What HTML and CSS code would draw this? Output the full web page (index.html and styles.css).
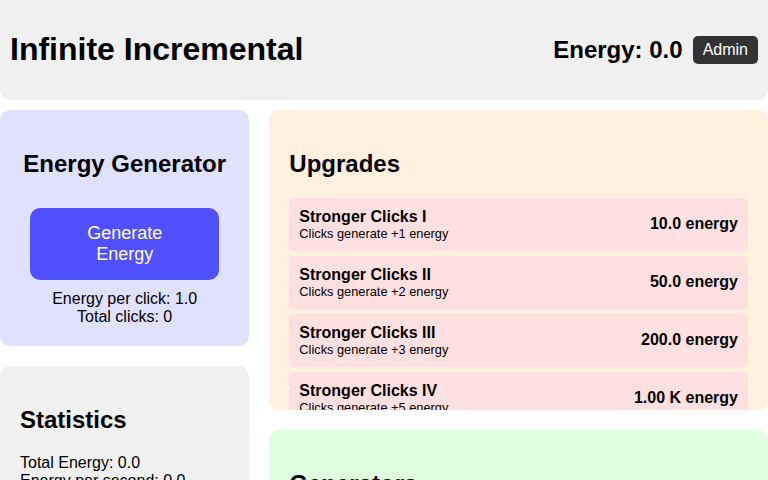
FILE: index.html
```html
<!DOCTYPE html>
<html>
<head>
<meta charset="utf-8">
<link rel="stylesheet" href="styles.css">
</head>
<body>
<header class="header">
  <h1 class="title">Infinite Incremental</h1>
  <div class="header-right">
    <h2 class="energy">Energy: 0.0</h2>
    <button class="admin">Admin</button>
  </div>
</header>
<main class="grid">
  <div class="left">
    <section class="card card-gen">
      <h2>Energy Generator</h2>
      <button class="gen-btn">Generate Energy</button>
      <div>Energy per click: 1.0</div>
      <div>Total clicks: 0</div>
    </section>
    <section class="card card-stats">
      <h2>Statistics</h2>
      <div>Total Energy: 0.0</div>
      <div>Energy per second: 0.0</div>
      <div>Total clicks: 0</div>
    </section>
  </div>
  <div class="right">
    <section class="card card-upgrades">
      <h2>Upgrades</h2>
      <div class="item">
        <div class="info"><div class="name">Stronger Clicks I</div><div class="desc">Clicks generate +1 energy</div></div>
        <div class="price">10.0 energy</div>
      </div>
      <div class="item">
        <div class="info"><div class="name">Stronger Clicks II</div><div class="desc">Clicks generate +2 energy</div></div>
        <div class="price">50.0 energy</div>
      </div>
      <div class="item">
        <div class="info"><div class="name">Stronger Clicks III</div><div class="desc">Clicks generate +3 energy</div></div>
        <div class="price">200.0 energy</div>
      </div>
      <div class="item">
        <div class="info"><div class="name">Stronger Clicks IV</div><div class="desc">Clicks generate +5 energy</div></div>
        <div class="price">1.00 K energy</div>
      </div>
      <div class="item">
        <div class="info"><div class="name">Stronger Clicks V</div><div class="desc">Clicks generate +10 energy</div></div>
        <div class="price">5.00 K energy</div>
      </div>
    </section>
    <section class="card card-generators">
      <h2>Generators</h2>
    </section>
  </div>
</main>
</body>
</html>
```
FILE: styles.css
```css
* { box-sizing: border-box; }
body {
  margin: 0;
  font-family: "Liberation Sans", Arial, sans-serif;
  font-size: 16px;
  color: #000;
  background: #fff;
}
.header {
  display: flex;
  justify-content: space-between;
  align-items: center;
  padding: 10px;
  background: #f0f0f0;
  border-radius: 0 0 10px 10px;
  margin-bottom: 10px;
}
.title {
  font-size: 32px;
  margin: 21.44px 0;
}
.header-right {
  display: flex;
  align-items: center;
  gap: 10px;
}
.energy {
  font-size: 24px;
  margin: 0;
}
.admin {
  background: #333;
  color: #fff;
  border: none;
  border-radius: 5px;
  font-family: inherit;
  font-size: 16px;
  padding: 5px 10px;
}
.grid {
  display: grid;
  grid-template-columns: 1fr 2fr;
  gap: 20px;
}
.left, .right {
  display: flex;
  flex-direction: column;
  gap: 20px;
}
.card {
  border-radius: 10px;
  padding: 20px;
}
.card h2 {
  font-size: 24px;
  margin: 19.92px 0;
}
.card-gen {
  background: #e0e0ff;
  text-align: center;
}
.gen-btn {
  display: inline-block;
  vertical-align: top;
  width: calc(100% - 20px);
  margin: 10px;
  padding: 15px 30px;
  background: #5050ff;
  color: #fff;
  border: none;
  border-radius: 10px;
  font-family: inherit;
  font-size: 18px;
}
.card-stats {
  background: #f0f0f0;
}
.card-upgrades {
  background: #fff0e0;
  height: 300px;
  overflow: hidden;
}
.card-generators {
  background: #e0ffe0;
  height: 300px;
}
.item {
  display: flex;
  justify-content: space-between;
  align-items: center;
  background: #ffe0e0;
  border-radius: 5px;
  padding: 10px;
  margin-bottom: 5px;
}
.name {
  font-weight: bold;
}
.desc {
  font-size: 12.8px;
}
.price {
  font-weight: bold;
}
```
